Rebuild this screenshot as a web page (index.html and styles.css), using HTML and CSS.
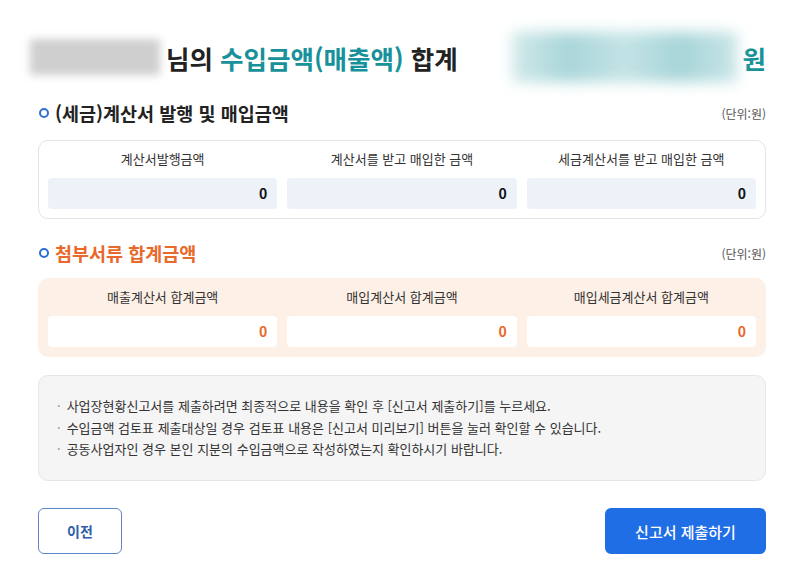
FILE: index.html
```html
<!DOCTYPE html>
<html lang="ko">
<head>
<meta charset="utf-8">
<link rel="stylesheet" href="styles.css">
</head>
<body>
<div class="page">
  <div class="headline">
    <div class="left">
      <span class="blur-name"></span>
      <span class="ht">님의 <span class="teal">수입금액(매출액)</span> 합계</span>
    </div>
    <div class="right">
      <span class="blur-amount"></span>
      <span class="teal">원</span>
    </div>
  </div>

  <div class="sec-head">
    <h2 class="sec-title"><span class="ring"></span>(세금)계산서 발행 및 매입금액</h2>
    <span class="unit">(단위:원)</span>
  </div>
  <div class="panel panel-blue">
    <div class="cell"><div class="label">계산서발행금액</div><div class="val">0</div></div>
    <div class="cell"><div class="label">계산서를 받고 매입한 금액</div><div class="val">0</div></div>
    <div class="cell"><div class="label">세금계산서를 받고 매입한 금액</div><div class="val">0</div></div>
  </div>

  <div class="sec-head sec2">
    <h2 class="sec-title orange"><span class="ring"></span>첨부서류 합계금액</h2>
    <span class="unit">(단위:원)</span>
  </div>
  <div class="panel panel-peach">
    <div class="cell"><div class="label">매출계산서 합계금액</div><div class="val">0</div></div>
    <div class="cell"><div class="label">매입계산서 합계금액</div><div class="val">0</div></div>
    <div class="cell"><div class="label">매입세금계산서 합계금액</div><div class="val">0</div></div>
  </div>

  <div class="notes">
    <ul>
      <li>사업장현황신고서를 제출하려면 최종적으로 내용을 확인 후 [신고서 제출하기]를 누르세요.</li>
      <li>수입금액 검토표 제출대상일 경우 검토표 내용은 [신고서 미리보기] 버튼을 눌러 확인할 수 있습니다.</li>
      <li>공동사업자인 경우 본인 지분의 수입금액으로 작성하였는지 확인하시기 바랍니다.</li>
    </ul>
  </div>

  <div class="actions">
    <button class="btn btn-prev">이전</button>
    <button class="btn btn-submit">신고서 제출하기</button>
  </div>
</div>
</body>
</html>
```
FILE: styles.css
```css
* { box-sizing: border-box; }
html, body { margin: 0; padding: 0; background: #fff; }
body {
  font-family: "Noto Sans CJK KR", "Noto Sans", sans-serif;
  color: #222;
}
.page {
  width: 728px;
  margin-left: 38px;
  padding-top: 28px;
}
.headline {
  display: flex;
  justify-content: space-between;
  align-items: center;
  height: 58px;
}
.left, .right { display: flex; align-items: center; }
.blur-name {
  display: block;
  width: 130px;
  height: 36px;
  margin-left: -8px;
  margin-right: 6px;
  background: #cfcfcf;
  filter: blur(4px);
}
.ht {
  font-size: 25.5px;
  font-weight: 700;
  color: #222;
}
.teal { color: #17919a; font-size: 25.5px; font-weight: 700; }
.blur-amount {
  display: block;
  width: 225px;
  height: 50px;
  margin-right: 6px;
  background: linear-gradient(90deg, #d2e9ea 0%, #a9d6d9 25%, #c4e3e5 50%, #a7d5d8 75%, #c9e5e7 100%);
  filter: blur(7px);
}
.sec-head {
  display: flex;
  justify-content: space-between;
  align-items: center;
  margin-top: 13px;
  height: 28px;
}
.sec2 { margin-top: 20px; }
.sec-title {
  margin: 0;
  display: flex;
  align-items: center;
  font-size: 18.5px;
  font-weight: 700;
  color: #222;
}
.sec-title.orange { color: #e8692b; }
.ring {
  display: inline-block;
  width: 10px;
  height: 10px;
  border: 2.5px solid #2e6fd2;
  border-radius: 50%;
  margin-left: 1px;
  margin-right: 6px;
}
.unit { font-size: 12px; color: #555; }
.panel {
  margin-top: 13px;
  display: grid;
  grid-template-columns: repeat(3, 1fr);
  gap: 10px;
  padding: 8px 9px 9px;
  border-radius: 10px;
}
.panel-blue { border: 1px solid #e1e4e8; }
.panel-peach { background: #fdf0e6; padding: 9px 10px 10px; margin-top: 11px; }
.cell { display: flex; flex-direction: column; }
.label {
  text-align: center;
  font-size: 13px;
  color: #333;
  height: 21px;
  line-height: 20px;
  margin-bottom: 8px;
}
.val {
  height: 31px;
  line-height: 31px;
  border-radius: 4px;
  background: #edf2f9;
  text-align: right;
  padding-right: 10px;
  font-size: 14px;
  font-weight: 700;
  color: #111;
}
.panel-peach .val { background: #fff; color: #e8692b; }
.notes {
  margin-top: 18px;
  background: #f5f5f5;
  border: 1px solid #e6e6e6;
  border-radius: 10px;
  height: 106px;
  padding: 19px 18px;
}
.notes ul { margin: 0; padding: 0; list-style: none; }
.notes li {
  font-size: 13px;
  color: #333;
  line-height: 21.5px;
}
.notes li::before {
  content: "·";
  color: #888;
  margin-right: 6px;
}
.actions {
  margin-top: 27px;
  display: flex;
  justify-content: space-between;
}
.btn {
  font-family: "Noto Sans CJK KR", "Noto Sans", sans-serif;
  height: 46px;
  border-radius: 6px;
  font-size: 14px;
  cursor: pointer;
}
.btn-prev {
  width: 84px;
  background: #fff;
  border: 1px solid #5b87c6;
  color: #2d5da8;
  font-weight: 700;
}
.btn-submit {
  width: 161px;
  background: #1f6ee5;
  border: none;
  color: #fff;
  font-size: 15px;
  font-weight: 500;
}
```
